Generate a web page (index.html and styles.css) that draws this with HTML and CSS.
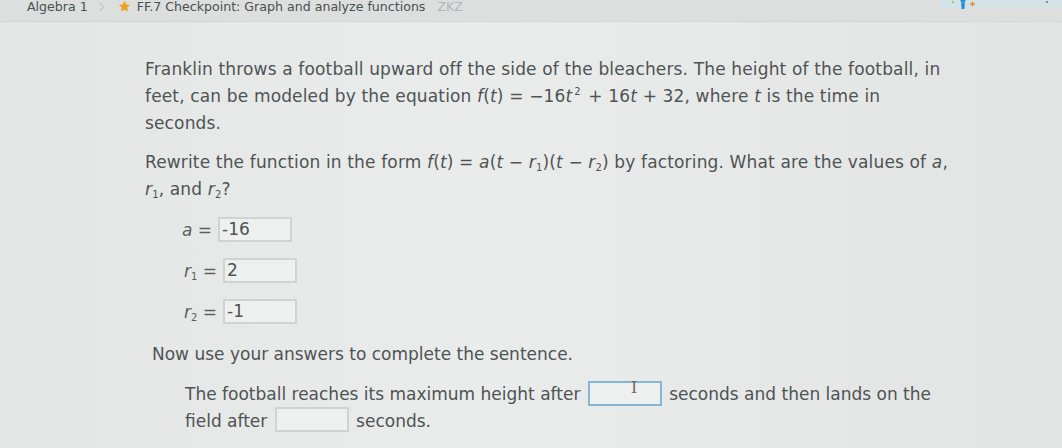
FILE: index.html
```html
<!DOCTYPE html>
<html>
<head>
<meta charset="utf-8">
<link rel="stylesheet" href="styles.css">
</head>
<body>
<header class="topbar">
  <nav class="crumbs">
    <span class="crumb">Algebra 1</span>
    <svg class="sep" width="7" height="10" viewBox="0 0 7 10"><path d="M1.5 1l4 4-4 4" fill="none" stroke="#c2c6c7" stroke-width="1.2"/></svg>
    <svg class="star" width="13" height="13" viewBox="0 0 24 24"><path d="M12 1.5l3.1 7 7.4.6-5.6 4.9 1.7 7.4L12 17.5l-6.6 3.9 1.7-7.4L1.5 9.1l7.4-.6z" fill="#f0a020"/></svg>
    <span class="crumb">FF.7 Checkpoint: Graph and analyze functions</span>
    <span class="code">ZKZ</span>
  </nav>
  <div class="userbox">
    <svg class="people" width="34" height="9" viewBox="0 0 34 9"><path d="M2 1l2 2" stroke="#8cc060" stroke-width="1.4"/><circle cx="13" cy="0" r="2.6" fill="#2a8fd0"/><path d="M11 2.5h4l-.6 6.5h-2.8z" fill="#2a8fd0"/><path d="M20 4h5M22.5 1.5v5" stroke="#f08a40" stroke-width="1.4"/></svg>
    <span class="dot"></span>
  </div>
</header>
<main class="content">
  <p class="para top">Franklin throws a football upward off the side of the bleachers. The height of the football, in feet, can be modeled by the equation <i>f</i>(<i>t</i>) = &minus;16<i>t</i><sup>2</sup> + 16<i>t</i> + 32, where <i>t</i> is the time in seconds.</p>
  <p class="para top p2">Rewrite the function in the form <i>f</i>(<i>t</i>) = <i>a</i>(<i>t</i> &minus; <i>r</i><sub>1</sub>)(<i>t</i> &minus; <i>r</i><sub>2</sub>) by factoring. What are the values of <i>a</i>, <i>r</i><sub>1</sub>, and <i>r</i><sub>2</sub>?</p>
  <div class="answers">
    <div class="row"><span class="lbl"><i>a</i> =</span><span class="box">-16</span></div>
    <div class="row r1"><span class="lbl"><i>r</i><sub>1</sub> =</span><span class="box">2</span></div>
    <div class="row r2"><span class="lbl"><i>r</i><sub>2</sub> =</span><span class="box">-1</span></div>
  </div>
  <p class="para now">Now use your answers to complete the sentence.</p>
  <p class="para sentence">The football reaches its maximum height after <span class="box blank focus"><span class="ibeam">I</span></span> seconds and then lands on the field after <span class="box blank"></span> seconds.</p>
</main>
</body>
</html>
```
FILE: styles.css
```css
html, body {
  margin: 0;
  padding: 0;
}
body {
  width: 1062px;
  height: 448px;
  overflow: hidden;
  background: linear-gradient(90deg, #e4e6e5 0%, #eaeceb 45%, #e6e8e7 75%, #e2e4e3 100%);
  font-family: "DejaVu Sans", Verdana, sans-serif;
  color: #4e5354;
}
.topbar {
  height: 21px;
  background: #dcdfde;
  border-bottom: 1px solid #d3d6d5;
  display: flex;
  justify-content: space-between;
  align-items: flex-start;
}
.crumbs {
  display: flex;
  align-items: center;
  padding-left: 27px;
  font-size: 12.6px;
  line-height: 13px;
  color: #4a4f52;
}
.sep {
  margin: 0 13px 0 10px;
}
.star {
  margin-right: 6px;
}
.code {
  color: #b3b7b8;
  margin-left: 12px;
}
.userbox {
  width: 122px;
  height: 8px;
  background: #d3e3e8;
  border-bottom-left-radius: 3px;
  display: flex;
  align-items: flex-start;
  justify-content: space-between;
  padding-left: 10px;
  box-sizing: border-box;
}
.dot {
  width: 2px;
  height: 2px;
  background: #8a9090;
  margin: 1px 14px 0 0;
}
.content {
  padding: 34px 0 0 145px;
}
.para {
  margin: 0;
  font-size: 17px;
  line-height: 27px;
}
.top {
  width: 808px;
  letter-spacing: 0.15px;
}
sup, sub {
  font-size: 10px;
  line-height: 0;
}
sup { vertical-align: 7px; margin-left: 2px; margin-right: 2px; }
sub { vertical-align: -3px; }
.p2 {
  margin-top: 12px;
}
.answers {
  display: flex;
  flex-direction: column;
  gap: 16px;
  margin-top: 14px;
  padding-left: 33px;
}
.row {
  display: flex;
  align-items: center;
  font-size: 17px;
  gap: 6px;
}
.row .lbl {
  width: 34px;
  text-align: right;
  color: #5a5f60;
}
.r1, .r2 { padding-left: 5px; }
.box {
  display: inline-block;
  box-sizing: border-box;
  width: 74px;
  height: 25px;
  border: 2px solid #d0d3d2;
  background: #eef0ef;
  font-size: 17px;
  line-height: 21px;
  padding-left: 2px;
  color: #4e5354;
}
.now {
  margin-top: 17px;
  padding-left: 7px;
}
.sentence {
  margin-top: 13px;
  padding-left: 40px;
  line-height: 26px;
  width: 760px;
}
.blank {
  vertical-align: middle;
  position: relative;
  top: -2px;
  margin: 0 2px;
}
.focus {
  border: 2px solid #86b6d6;
}
.ibeam {
  position: absolute;
  left: 41px;
  top: -6px;
  font-family: "DejaVu Serif", serif;
  font-size: 17px;
  color: #6a6f70;
}
```
